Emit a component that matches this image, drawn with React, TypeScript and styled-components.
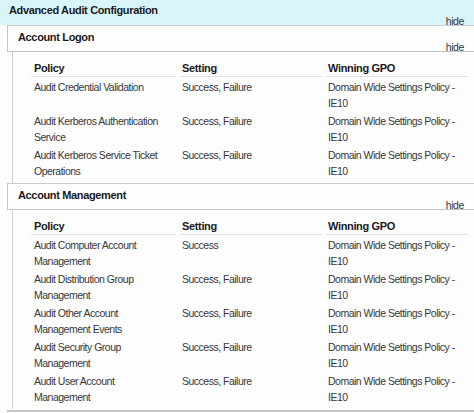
import React from 'react';
import styled, { createGlobalStyle } from 'styled-components';

type Row = { policy: string; setting: string; gpo: string };

const GPO = 'Domain Wide Settings Policy - IE10';

const logonRows: Row[] = [
  { policy: 'Audit Credential Validation', setting: 'Success, Failure', gpo: GPO },
  { policy: 'Audit Kerberos Authentication Service', setting: 'Success, Failure', gpo: GPO },
  { policy: 'Audit Kerberos Service Ticket Operations', setting: 'Success, Failure', gpo: GPO },
];

const managementRows: Row[] = [
  { policy: 'Audit Computer Account Management', setting: 'Success', gpo: GPO },
  { policy: 'Audit Distribution Group Management', setting: 'Success, Failure', gpo: GPO },
  { policy: 'Audit Other Account Management Events', setting: 'Success, Failure', gpo: GPO },
  { policy: 'Audit Security Group Management', setting: 'Success, Failure', gpo: GPO },
  { policy: 'Audit User Account Management', setting: 'Success, Failure', gpo: GPO },
];

const GlobalStyle = createGlobalStyle`
  html, body {
    margin: 0;
    padding: 0;
    background: #fdfdfd;
  }
  body {
    font-family: "Liberation Sans", Arial, sans-serif;
    color: #333;
    overflow: hidden;
  }
`;

function PolicyTable({ rows }: { rows: Row[] }) {
  return (
    <Table>
      <colgroup>
        <col style={{ width: 145 }} />
        <col style={{ width: 143 }} />
        <col style={{ width: 144 }} />
      </colgroup>
      <thead>
        <tr>
          <HeadCell>Policy</HeadCell>
          <HeadCell>Setting</HeadCell>
          <HeadCell>Winning GPO</HeadCell>
        </tr>
      </thead>
      <tbody>
        {rows.map((r) => (
          <tr key={r.policy}>
            <Cell>{r.policy}</Cell>
            <Cell>{r.setting}</Cell>
            <Cell>{r.gpo}</Cell>
          </tr>
        ))}
      </tbody>
    </Table>
  );
}

function Section({ title, rows }: { title: string; rows: Row[] }) {
  return (
    <>
      <SectionHeader>
        <SectionTitle>{title}</SectionTitle>
        <HideLink href="#">hide</HideLink>
      </SectionHeader>
      <SectionBody>
        <PolicyTable rows={rows} />
      </SectionBody>
    </>
  );
}

export default function App() {
  return (
    <Page>
      <GlobalStyle />
      <CategoryHeader>
        <CategoryTitle>Advanced Audit Configuration</CategoryTitle>
        <HideLink href="#">hide</HideLink>
      </CategoryHeader>
      <Section title="Account Logon" rows={logonRows} />
      <Section title="Account Management" rows={managementRows} />
      <NextSection />
    </Page>
  );
}

const Page = styled.div`
  width: 474px;
  height: 413px;
  overflow: hidden;
`;

const CategoryHeader = styled.div`
  height: 25px;
  background: #d8f5fc;
  display: flex;
  justify-content: space-between;
  padding: 0 10px 0 9px;
`;

const CategoryTitle = styled.span`
  font-weight: bold;
  font-size: 11px;
  letter-spacing: -0.35px;
  color: #1a1a1a;
  line-height: 20px;
`;

const HideLink = styled.a`
  align-self: flex-end;
  font-size: 10.5px;
  letter-spacing: -0.4px;
  line-height: 12px;
  color: #333;
  text-decoration: none;
  margin-bottom: -2px;
`;

const SectionHeader = styled.div`
  margin-left: 7px;
  height: 25px;
  border-top: 1px solid #c8ccce;
  border-left: 1px solid #c4c4c4;
  border-bottom: 1px solid #c4c4c4;
  background: #fefefe;
  display: flex;
  justify-content: space-between;
  padding: 0 10px 0 10px;
`;

const SectionTitle = styled.span`
  font-weight: bold;
  font-size: 11px;
  letter-spacing: -0.35px;
  color: #1a1a1a;
  line-height: 23px;
`;

const SectionBody = styled.div`
  margin-left: 12px;
  border-left: 1px solid #d0d0d0;
  padding: 6px 0 4px 15px;
`;

const Table = styled.table`
  border-collapse: separate;
  border-spacing: 3px 0;
  table-layout: fixed;
  width: 444px;
`;

const HeadCell = styled.th`
  text-align: left;
  font-weight: bold;
  font-size: 11px;
  letter-spacing: -0.35px;
  color: #1a1a1a;
  line-height: 16px;
  padding: 2px 3px 0;
  border-bottom: 1px solid #dfe3ee;
`;

const Cell = styled.td`
  vertical-align: top;
  font-size: 10.5px;
  letter-spacing: -0.5px;
  line-height: 16px;
  color: #383838;
  padding: 2px 8px 0 3px;
`;

const NextSection = styled.div`
  margin-left: 7px;
  margin-top: 1px;
  border-top: 2px solid #c6c6c6;
  height: 10px;
`;
